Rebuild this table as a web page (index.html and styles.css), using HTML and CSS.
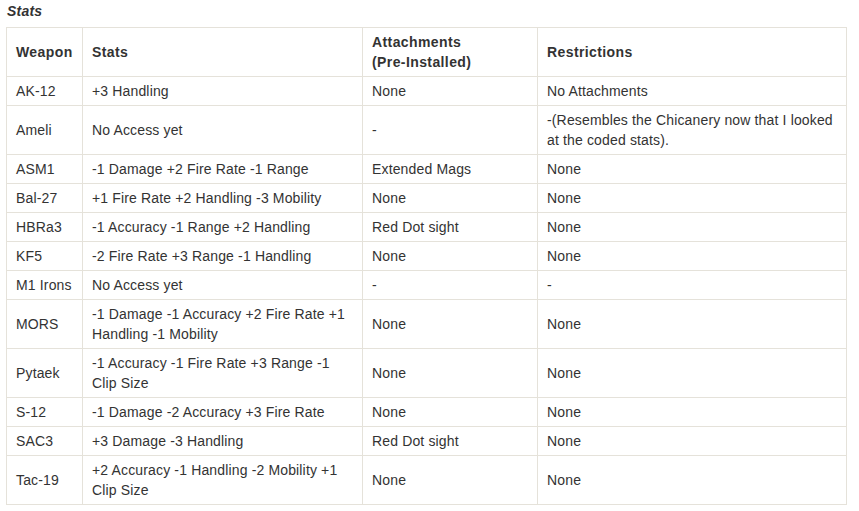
FILE: index.html
```html
<!DOCTYPE html>
<html>
<head>
<meta charset="utf-8">
<link rel="stylesheet" href="styles.css">
</head>
<body>
<div class="page">
  <p class="title">Stats</p>
  <table class="stats">
    <colgroup>
      <col class="c-weapon">
      <col class="c-stats">
      <col class="c-att">
      <col class="c-res">
    </colgroup>
    <thead>
      <tr><th>Weapon</th><th>Stats</th><th>Attachments<br>(Pre-Installed)</th><th>Restrictions</th></tr>
    </thead>
    <tbody>
      <tr><td>AK-12</td><td>+3 Handling</td><td>None</td><td>No Attachments</td></tr>
      <tr><td>Ameli</td><td>No Access yet</td><td>-</td><td>-(Resembles the Chicanery now that I looked at the coded stats).</td></tr>
      <tr><td>ASM1</td><td>-1 Damage +2 Fire Rate -1 Range</td><td>Extended Mags</td><td>None</td></tr>
      <tr><td>Bal-27</td><td>+1 Fire Rate +2 Handling -3 Mobility</td><td>None</td><td>None</td></tr>
      <tr><td>HBRa3</td><td>-1 Accuracy -1 Range +2 Handling</td><td>Red Dot sight</td><td>None</td></tr>
      <tr><td>KF5</td><td>-2 Fire Rate +3 Range -1 Handling</td><td>None</td><td>None</td></tr>
      <tr><td>M1 Irons</td><td>No Access yet</td><td>-</td><td>-</td></tr>
      <tr><td>MORS</td><td>-1 Damage -1 Accuracy +2 Fire Rate +1 Handling -1 Mobility</td><td>None</td><td>None</td></tr>
      <tr><td>Pytaek</td><td>-1 Accuracy -1 Fire Rate +3 Range -1 Clip Size</td><td>None</td><td>None</td></tr>
      <tr><td>S-12</td><td>-1 Damage -2 Accuracy +3 Fire Rate</td><td>None</td><td>None</td></tr>
      <tr><td>SAC3</td><td>+3 Damage -3 Handling</td><td>Red Dot sight</td><td>None</td></tr>
      <tr><td>Tac-19</td><td>+2 Accuracy -1 Handling -2 Mobility +1 Clip Size</td><td>None</td><td>None</td></tr>
    </tbody>
  </table>
</div>
</body>
</html>
```

FILE: styles.css
```css
html, body {
  margin: 0;
  padding: 0;
  background: #ffffff;
}

.page {
  padding: 1px 0 0 6px;
  font-family: "Liberation Sans", Arial, sans-serif;
  font-size: 14px;
  line-height: 20px;
  color: #333333;
}

.title {
  margin: 0 0 6px 1px;
  font-weight: bold;
  font-style: italic;
  font-size: 14px;
  line-height: 20px;
  letter-spacing: 0.2px;
}

.stats {
  border-collapse: collapse;
  table-layout: fixed;
  width: 840px;
}

.c-weapon { width: 76px; }
.c-stats { width: 280px; }
.c-att { width: 175px; }
.c-res { width: 309px; }

.stats th,
.stats td {
  border: 1px solid #e5e2da;
  padding: 4px 9px;
  text-align: left;
  vertical-align: middle;
  font-size: 14px;
  line-height: 20px;
  letter-spacing: 0.15px;
}

.stats th {
  font-weight: bold;
  color: #333333;
  letter-spacing: 0.4px;
}
```
